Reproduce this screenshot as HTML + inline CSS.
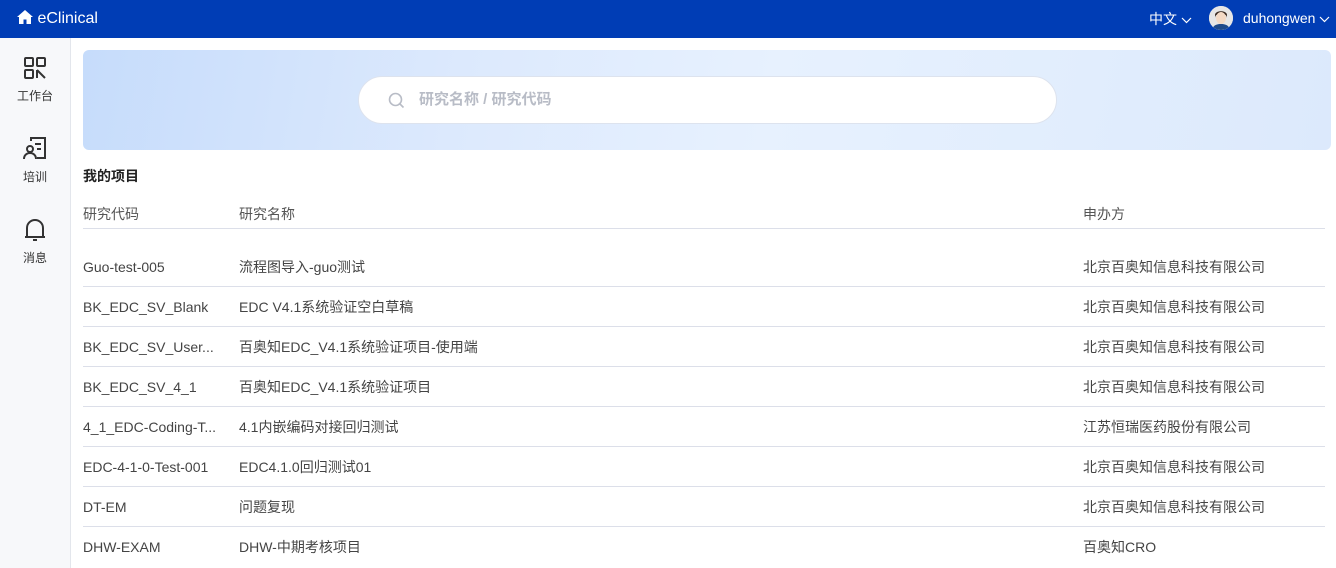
<!DOCTYPE html>
<html><head><meta charset="utf-8"><style>
*{margin:0;padding:0;box-sizing:border-box}
body{width:1336px;height:568px;overflow:hidden;background:#fff;font-family:"Liberation Sans","Noto Sans CJK SC",sans-serif;color:#333;position:relative}
.top{position:absolute;left:0;top:0;width:1336px;height:38px;background:#003db5;color:#fff}
.logo{position:absolute;left:17px;top:9px;font-size:16px;line-height:20px}
.lang{position:absolute;left:1149px;top:9px;font-size:14px;line-height:20px}
.av{position:absolute;left:1209px;top:6px;width:24px;height:24px;border-radius:50%;background:#e8e8e8;overflow:hidden}
.user{position:absolute;left:1243px;top:8px;font-size:14px;line-height:20px}
.side{position:absolute;left:0;top:38px;width:71px;height:530px;background:#f7f8fa;border-right:1px solid #e3e6ec}
.item{position:absolute;left:0;width:70px;text-align:center;font-size:12px;color:#333;line-height:16px}
.item svg{display:block;margin:0 auto 8px}
.banner{position:absolute;left:83px;top:50px;width:1248px;height:100px;border-radius:6px;background:linear-gradient(100deg,#c6dcfb 0%,#dce9fd 30%,#e7f1fe 55%,#e1edfd 80%,#dce9fc 100%);overflow:hidden}
.search{position:absolute;left:275px;top:26px;width:699px;height:48px;border-radius:24px;background:#fff;border:1px solid #dde3ee}
.search span{position:absolute;left:60px;top:13px;font-size:15px;line-height:20px;color:#b8bcc6;font-weight:bold}
.h{position:absolute;left:83px;top:167px;font-size:14px;line-height:18px;font-weight:bold;color:#222}
.row{position:absolute;left:83px;width:1242px;height:40px;border-bottom:1px solid #dcdfe9;font-size:14px;line-height:18px;color:#444}
.row div{position:absolute;top:11px;white-space:nowrap}
.c1{left:0}.c2{left:156px}.c3{left:1000px}
</style></head><body>
<div class="top">
<div class="logo"><svg width="16" height="14" viewBox="0 0 16 14" style="vertical-align:-1px"><path d="M8 0L0 7h2v7h4.5V9.5h3V14H14V7h2z" fill="#fff"/></svg> eClinical</div>
<div class="lang">中文 <svg width="11" height="7" viewBox="0 0 11 7"><path d="M1 1l4.5 4.5L10 1" stroke="#fff" fill="none" stroke-width="1.2"/></svg></div>
<div class="av"><svg width="24" height="24" viewBox="0 0 24 24"><rect width="24" height="24" fill="#e6e6e6"/><path d="M6 12c0-6 12-6 12 0v-3c0-5-12-5-12 0z" fill="#3a2a20"/><ellipse cx="12" cy="12" rx="5" ry="6" fill="#f3d9c4"/><path d="M3 24c1-5 5-6 9-6s8 1 9 6z" fill="#1e4a8a"/></svg></div>
<div class="user">duhongwen <svg width="11" height="7" viewBox="0 0 11 7"><path d="M1 1l4.5 4.5L10 1" stroke="#fff" fill="none" stroke-width="1.2"/></svg></div>
</div>
<div class="side">
<div class="item" style="top:18px"><svg width="24" height="24" viewBox="0 0 24 24" fill="none" stroke="#333" stroke-width="2"><rect x="2" y="2" width="8" height="8" rx="1"/><rect x="14" y="2" width="8" height="8" rx="1"/><rect x="2" y="14" width="8" height="8" rx="1"/><path d="M14 14v8M14 14l8 8"/></svg>工作台</div>
<div class="item" style="top:99px"><svg width="24" height="24" viewBox="0 0 24 24" fill="none" stroke="#333" stroke-width="2"><path d="M8 4V1h14v20h-8M12 7h6M14 12h4"/><circle cx="7" cy="12" r="3"/><path d="M1 22c0-4 3-6 6-6s6 2 6 6"/></svg>培训</div>
<div class="item" style="top:180px"><svg width="24" height="24" viewBox="0 0 24 24" fill="none" stroke="#333" stroke-width="2"><path d="M4 19V10a8 8 0 0116 0v9zM2 19h20M10 22h4"/></svg>消息</div>
</div>
<div class="banner"><div class="search"><svg style="position:absolute;left:29px;top:15px" width="17" height="17" viewBox="0 0 17 17" fill="none" stroke="#b8bcc6" stroke-width="1.6"><circle cx="7.5" cy="7.5" r="6"/><path d="M12 12l3.5 3.5"/></svg><span>研究名称 / 研究代码</span></div></div>
<div class="h">我的项目</div>
<div class="row" style="top:206px;height:23px;color:#555"><div class="c1" style="top:-1px">研究代码</div><div class="c2" style="top:-1px">研究名称</div><div class="c3" style="top:-1px">申办方</div></div>
<div class="row" style="top:247px"><div class="c1">Guo-test-005</div><div class="c2">流程图导入-guo测试</div><div class="c3">北京百奥知信息科技有限公司</div></div>
<div class="row" style="top:287px"><div class="c1">BK_EDC_SV_Blank</div><div class="c2">EDC V4.1系统验证空白草稿</div><div class="c3">北京百奥知信息科技有限公司</div></div>
<div class="row" style="top:327px"><div class="c1">BK_EDC_SV_User...</div><div class="c2">百奥知EDC_V4.1系统验证项目-使用端</div><div class="c3">北京百奥知信息科技有限公司</div></div>
<div class="row" style="top:367px"><div class="c1">BK_EDC_SV_4_1</div><div class="c2">百奥知EDC_V4.1系统验证项目</div><div class="c3">北京百奥知信息科技有限公司</div></div>
<div class="row" style="top:407px"><div class="c1">4_1_EDC-Coding-T...</div><div class="c2">4.1内嵌编码对接回归测试</div><div class="c3">江苏恒瑞医药股份有限公司</div></div>
<div class="row" style="top:447px"><div class="c1">EDC-4-1-0-Test-001</div><div class="c2">EDC4.1.0回归测试01</div><div class="c3">北京百奥知信息科技有限公司</div></div>
<div class="row" style="top:487px"><div class="c1">DT-EM</div><div class="c2">问题复现</div><div class="c3">北京百奥知信息科技有限公司</div></div>
<div class="row" style="top:527px;border-bottom:none"><div class="c1">DHW-EXAM</div><div class="c2">DHW-中期考核项目</div><div class="c3">百奥知CRO</div></div>
</body></html>
